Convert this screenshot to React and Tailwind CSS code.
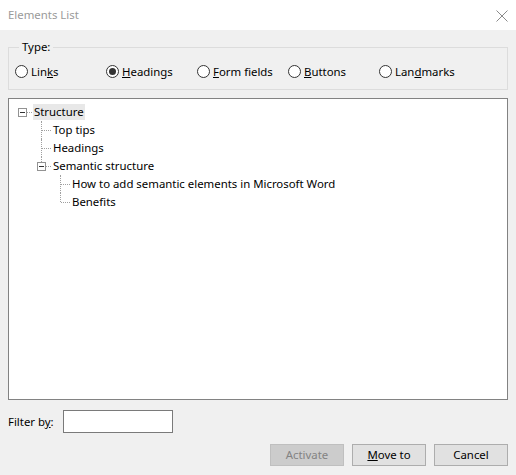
import React from "react";

const font = { fontFamily: '"Noto Sans", "Segoe UI", sans-serif' };

function Radio({ checked, children }) {
  return (
    <label className="flex items-center gap-[3px] w-[91px]">
      <span className="w-[13px] h-[13px] rounded-full border border-[#333333] bg-white flex items-center justify-center shrink-0">
        {checked && <span className="w-[7px] h-[7px] rounded-full bg-[#333333]" />}
      </span>
      <span className="whitespace-nowrap">{children}</span>
    </label>
  );
}

function Expander() {
  return (
    <span className="absolute left-[5px] top-[5px] w-[9px] h-[9px] border border-[#929292] bg-white flex items-center justify-center">
      <span className="w-[5px] h-px bg-[#333333]" />
    </span>
  );
}

// one row of the tree; the 19px cell holds the dotted connectors
function TreeRow({ level, text, last, expander, root, selected }) {
  const indent = ["pl-[4px]", "pl-[23px]", "pl-[42px]"][level];
  return (
    <div className={`flex h-[18px] items-center ${indent}`}>
      <div className="relative w-[19px] h-[18px] shrink-0">
        {!root && (
          <span
            className={`absolute left-[9px] top-0 border-l border-dotted border-[#a0a0a0] ${
              last ? "h-[9px]" : "h-[18px]"
            }`}
          />
        )}
        <span className="absolute left-[10px] top-[9px] w-[9px] border-t border-dotted border-[#a0a0a0]" />
        {expander && <Expander />}
      </div>
      <span
        className={`ml-[1px] px-[1px] leading-[16px] whitespace-nowrap ${
          selected ? "bg-[#e8e8e8]" : ""
        }`}
      >
        {text}
      </span>
    </div>
  );
}

export default function App() {
  return (
    <div
      className="w-[516px] h-[475px] bg-[#f0f0f0] text-[11.4px] text-black flex flex-col overflow-hidden"
      style={font}
    >
      {/* title bar */}
      <div className="h-[30px] bg-white flex items-center justify-between pl-[8px] pr-[8px] shrink-0">
        <span className="text-[#9a9a9a]">Elements List</span>
        <svg width="12" height="12" viewBox="0 0 12 12" className="mt-[1px]">
          <path d="M0.5 0.5 L11.5 11.5 M11.5 0.5 L0.5 11.5" stroke="#8a8a8a" strokeWidth="1" fill="none" />
        </svg>
      </div>

      <div className="px-[8px] flex flex-col">
        {/* type group */}
        <fieldset className="mt-[9px] border border-[#dcdcdc] px-[5px] pt-[8px] pb-[8px]">
          <legend className="ml-[5px] px-[3px] leading-[16px]">Type:</legend>
          <div className="flex items-center h-[18px] ml-[1px]">
            <Radio>
              Lin<u>k</u>s
            </Radio>
            <Radio checked>
              <u>H</u>eadings
            </Radio>
            <Radio>
              <u>F</u>orm fields
            </Radio>
            <Radio>
              <u>B</u>uttons
            </Radio>
            <Radio>
              Lan<u>d</u>marks
            </Radio>
          </div>
        </fieldset>

        {/* tree */}
        <div className="mt-[8px] h-[302px] border border-[#828282] bg-white pt-[4px]">
          <TreeRow level={0} root expander selected text="Structure" />
          <TreeRow level={1} text="Top tips" />
          <TreeRow level={1} text="Headings" />
          <TreeRow level={1} last expander text="Semantic structure" />
          <TreeRow level={2} text="How to add semantic elements in Microsoft Word" />
          <TreeRow level={2} last text="Benefits" />
        </div>

        {/* filter */}
        <div className="mt-[10px] flex items-center h-[23px]">
          <span className="w-[55px]">
            Filter b<u>y</u>:
          </span>
          <input className="w-[110px] h-[23px] border border-[#7a7a7a] bg-white outline-none px-1" />
        </div>

        {/* buttons */}
        <div className="mt-[11px] flex justify-end gap-[8px]">
          <button className="w-[74px] h-[22px] border border-[#bfbfbf] bg-[#cccccc] text-[#838383]">
            Activate
          </button>
          <button className="w-[74px] h-[22px] border border-[#adadad] bg-[#e1e1e1]">
            <u>M</u>ove to
          </button>
          <button className="w-[74px] h-[22px] border border-[#adadad] bg-[#e1e1e1]">
            Cancel
          </button>
        </div>
      </div>
    </div>
  );
}
